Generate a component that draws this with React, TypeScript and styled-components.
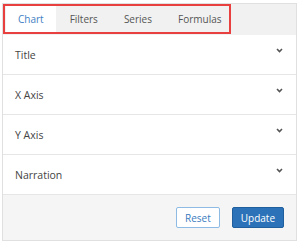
import React from "react";
import styled, { createGlobalStyle } from "styled-components";

const Global = createGlobalStyle`
  html, body { margin: 0; padding: 0; background: #fff; }
  body { font-family: "Open Sans", "Liberation Sans", sans-serif; }
`;

const Page = styled.div`
  padding: 3px 3px 0 2px;
`;

const Panel = styled.div`
  width: 295px;
  height: 238px;
  box-sizing: border-box;
  border: 1px solid #e0e0e0;
  display: flex;
  flex-direction: column;
  background: #fff;
`;

const TabBar = styled.div`
  height: 31px;
  background: #f1f1f1;
  display: flex;
  flex: none;
`;

const TabList = styled.div`
  display: flex;
  align-items: flex-end;
  width: 228px;
  height: 30px;
  box-sizing: border-box;
  border: 2px solid #e8403f;
  padding: 0 0 0 1px;
  gap: 2px;
  overflow: hidden;
`;

const Tab = styled.div<{ $active?: boolean }>`
  flex: none;
  height: 26px;
  padding: 0 12px;
  display: flex;
  align-items: center;
  font-size: 10px;
  color: ${(p) => (p.$active ? "#3f80c4" : "#555")};
  background: ${(p) => (p.$active ? "#fff" : "transparent")};
`;

const Row = styled.div`
  height: 40px;
  flex: none;
  box-sizing: border-box;
  border-bottom: 1px solid #e6e6e6;
  display: flex;
  align-items: center;
  justify-content: space-between;
  padding: 0 13px 0 12px;
  font-size: 10.5px;
  color: #444;
`;

const Chevron = styled.svg`
  width: 7px;
  height: 5px;
  margin-top: -8px;
`;

const Footer = styled.div`
  flex: 1;
  background: #f5f5f5;
  display: flex;
  align-items: center;
  justify-content: flex-end;
  gap: 12px;
  padding: 0 12px 0 0;
`;

const Button = styled.button<{ $primary?: boolean }>`
  height: 21px;
  padding: 0 8px;
  border-radius: 2px;
  font-family: "Open Sans", "Liberation Sans", sans-serif;
  font-size: 10px;
  cursor: pointer;
  border: 1px solid ${(p) => (p.$primary ? "#1f5f9e" : "#8dbbe3")};
  background: ${(p) => (p.$primary ? "#2b72b8" : "#fff")};
  color: ${(p) => (p.$primary ? "#fff" : "#3a7cc0")};
`;

const ChevronIcon = () => (
  <Chevron viewBox="0 0 7 5">
    <path d="M1 1 L3.5 3.5 L6 1" fill="none" stroke="#555" strokeWidth="1.6" />
  </Chevron>
);

const rows = ["Title", "X Axis", "Y Axis", "Narration"];

export default function App() {
  return (
    <>
      <Global />
      <Page>
        <Panel>
          <TabBar>
            <TabList>
              <Tab $active>Chart</Tab>
              <Tab>Filters</Tab>
              <Tab>Series</Tab>
              <Tab>Formulas</Tab>
            </TabList>
          </TabBar>
          {rows.map((r) => (
            <Row key={r}>
              <span>{r}</span>
              <ChevronIcon />
            </Row>
          ))}
          <Footer>
            <Button>Reset</Button>
            <Button $primary>Update</Button>
          </Footer>
        </Panel>
      </Page>
    </>
  );
}
